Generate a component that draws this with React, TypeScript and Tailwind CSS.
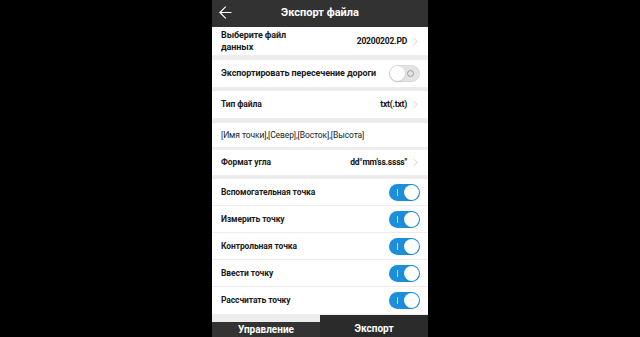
import { ArrowLeft, ChevronRight } from 'lucide-react';

const font = { fontFamily: 'Roboto, "Liberation Sans", Arial, sans-serif' };

type PointRow = { id: string; label: string; on: boolean };

const pointRows: PointRow[] = [
  { id: 'aux', label: 'Вспомогательная точка', on: true },
  { id: 'measure', label: 'Измерить точку', on: true },
  { id: 'control', label: 'Контрольная точка', on: true },
  { id: 'input', label: 'Ввести точку', on: true },
  { id: 'calc', label: 'Рассчитать точку', on: true },
];

function Toggle({ on }: { on: boolean }) {
  if (on) {
    return (
      <div className="relative h-[17px] w-[31px] rounded-full bg-[#1b8fdc]">
        <span className="absolute left-[8px] top-[5px] h-[7px] w-[1px] bg-white/70" />
        <span className="absolute right-[1px] top-[1px] h-[15px] w-[15px] rounded-full bg-white shadow" />
      </div>
    );
  }
  return (
    <div className="relative h-[17px] w-[31px] rounded-full border border-[#d8d8d8] bg-[#e4e4e4]">
      <span className="absolute right-[5px] top-[4px] h-[7px] w-[7px] rounded-full border border-[#9a9a9a]" />
      <span className="absolute left-0 top-0 h-[15px] w-[15px] rounded-full bg-white shadow" />
    </div>
  );
}

function Value({ text }: { text: string }) {
  return (
    <div className="flex items-center gap-[2px]">
      <span className="text-[8.5px] font-bold tracking-[-0.2px] text-[#111]">{text}</span>
      <ChevronRight className="h-[13px] w-[13px] text-[#bdbdbd]" strokeWidth={1.25} />
    </div>
  );
}

const label = 'text-[9px] font-bold tracking-[-0.1px] text-[#1a1a1a]';
const labelSm = 'text-[8.5px] font-bold tracking-[-0.1px] text-[#1a1a1a]';

export default function App() {
  return (
    <div className="flex h-[337px] w-[640px] justify-center bg-black" style={font}>
      <div className="flex h-full w-[216px] flex-col bg-[#ededed]">
        {/* Header */}
        <div className="relative flex h-[27px] shrink-0 items-center justify-center bg-[#323232]">
          <ArrowLeft className="absolute left-[4px] top-[3px] h-[19px] w-[19px] text-white" strokeWidth={1.4} />
          <span className="text-[11px] font-bold text-white">Экспорт файла</span>
        </div>

        <div className="flex h-[28px] items-center justify-between bg-white pl-[9px] pr-[6px]">
          <span className={`${label} leading-[12px]`}>
            Выберите файл
            <br />
            данных
          </span>
          <Value text="20200202.PD" />
        </div>

        <div className="mt-[5px] flex h-[27px] items-center justify-between bg-white pl-[9px] pr-[8px]">
          <span className={label}>Экспортировать пересечение дороги</span>
          <Toggle on={false} />
        </div>

        <div className="mt-[4px] flex h-[27px] items-center justify-between bg-white pl-[9px] pr-[6px]">
          <span className={labelSm}>Тип файла</span>
          <Value text="txt(.txt)" />
        </div>

        <div className="mt-[5px] flex h-[24px] items-center bg-white pl-[9px]">
          <span className="text-[8.5px] tracking-[-0.1px] text-[#222]">[Имя точки],[Север],[Восток],[Высота]</span>
        </div>

        <div className="mt-[3px] flex h-[25px] items-center justify-between bg-white pl-[9px] pr-[6px]">
          <span className={labelSm}>Формат угла</span>
          <Value text="dd°mm'ss.ssss&quot;" />
        </div>

        <div className="mt-[4px] flex flex-col bg-white">
          {pointRows.map((row, i) => (
            <div
              key={row.id}
              className={
                i < pointRows.length - 1
                  ? 'flex h-[27px] items-center justify-between border-b border-[#ececec] pl-[9px] pr-[8px]'
                  : 'flex h-[27px] items-center justify-between pl-[9px] pr-[8px]'
              }
            >
              <span className={labelSm}>{row.label}</span>
              <Toggle on={row.on} />
            </div>
          ))}
        </div>

        {/* Bottom tabs */}
        <div className="mt-auto flex items-end">
          <div className="flex h-[15px] w-[108px] items-center justify-center bg-[#333]">
            <span className="text-[10px] font-bold leading-none text-white">Управление</span>
          </div>
          <div className="flex h-[22px] w-[108px] items-center justify-center bg-[#2b2b2b] pt-[6px]">
            <span className="text-[10px] font-bold leading-none text-white">Экспорт</span>
          </div>
        </div>
      </div>
    </div>
  );
}
